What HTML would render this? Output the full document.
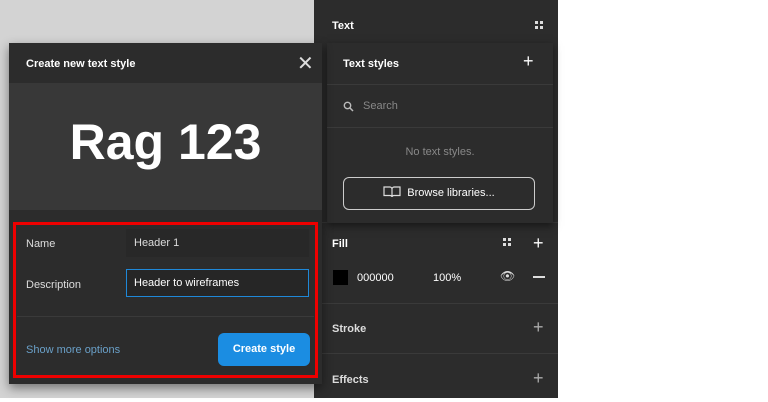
<!DOCTYPE html>
<html><head><style>
*{margin:0;padding:0;box-sizing:border-box}
body{width:768px;height:402px;background:#fff;position:relative;overflow:hidden;font-family:"Liberation Sans",sans-serif;color:#fff}
.a{position:absolute}
.t{font-size:11px;font-weight:bold}
.g{position:absolute;width:9px;height:9px}
.g i{position:absolute;width:3px;height:3px;background:#ddd}
</style></head><body>
<div class="a" style="left:0;top:0;width:316px;height:398px;background:#d3d3d3"></div>
<div class="a" style="left:314px;top:0;width:244px;height:398px;background:#2c2c2c"></div>
<div class="a t" style="left:332px;top:20px">Text</div>
<div class="g" style="left:535px;top:21px"><i style="left:0;top:0"></i><i style="left:5px;top:0"></i><i style="left:0;top:5px"></i><i style="left:5px;top:5px"></i></div>
<div class="a" style="left:314px;top:222px;width:244px;height:1px;background:#3a3a3a"></div>
<div class="a t" style="left:332px;top:238px">Fill</div>
<div class="g" style="left:503px;top:238px"><i style="left:0;top:0"></i><i style="left:5px;top:0"></i><i style="left:0;top:5px"></i><i style="left:5px;top:5px"></i></div>
<div class="a" style="left:533px;top:233px;font-size:18px;font-weight:300">+</div>
<div class="a" style="left:333px;top:270px;width:15px;height:15px;background:#000"></div>
<div class="a t" style="left:357px;top:272px;font-weight:normal">000000</div>
<div class="a t" style="left:433px;top:272px;font-weight:normal">100%</div>
<div class="a" style="left:500px;top:269px;font-size:12px;color:#ddd">👁</div>
<div class="a" style="left:533px;top:276px;width:12px;height:1.5px;background:#ddd"></div>
<div class="a" style="left:314px;top:303px;width:244px;height:1px;background:#3a3a3a"></div>
<div class="a t" style="left:332px;top:323px;color:#ddd">Stroke</div>
<div class="a" style="left:533px;top:317px;font-size:18px;font-weight:300;color:#aaa">+</div>
<div class="a" style="left:314px;top:353px;width:244px;height:1px;background:#3a3a3a"></div>
<div class="a t" style="left:332px;top:374px;color:#ddd">Effects</div>
<div class="a" style="left:533px;top:368px;font-size:18px;font-weight:300;color:#aaa">+</div>

<div class="a" style="left:327px;top:43px;width:226px;height:180px;background:#2c2c2c;box-shadow:0 3px 8px rgba(0,0,0,.5)">
 <div class="a t" style="left:16px;top:15px">Text styles</div>
 <div class="a" style="left:196px;top:8px;font-size:18px;font-weight:300">+</div>
 <div class="a" style="left:0;top:41px;width:226px;height:1px;background:#3a3a3a"></div>
 <svg class="a" style="left:16px;top:58px" width="11" height="11" viewBox="0 0 11 11"><circle cx="4.5" cy="4.5" r="3.2" fill="none" stroke="#bbb" stroke-width="1.4"/><path d="M7 7l3 3" stroke="#bbb" stroke-width="1.5"/></svg>
 <div class="a" style="left:36px;top:57px;font-size:11px;color:#888">Search</div>
 <div class="a" style="left:0;top:84px;width:226px;height:1px;background:#3a3a3a"></div>
 <div class="a" style="left:0;top:103px;width:226px;text-align:center;font-size:11px;color:#888">No text styles.</div>
 <div class="a" style="left:16px;top:134px;width:192px;height:33px;border:1.5px solid #ccc;border-radius:6px;text-align:center;line-height:30px;font-size:11px"><svg width="18" height="12" viewBox="0 0 18 12" style="vertical-align:-2px;margin-right:6px"><path d="M1 1h6c1 0 2 1 2 2v8c0-1-1-1.5-2-1.5H1zM17 1h-6c-1 0-2 1-2 2v8c0-1 1-1.5 2-1.5h6z" fill="none" stroke="#ddd" stroke-width="1.2"/></svg>Browse libraries...</div>
</div>

<div class="a" style="left:9px;top:43px;width:313px;height:341px;background:#2c2c2c;box-shadow:0 4px 10px rgba(0,0,0,.45)">
 <div class="a t" style="left:17px;top:15px">Create new text style</div>
 <div class="a" style="left:288px;top:8px;font-size:20px;color:#ddd">✕</div>
 <div class="a" style="left:0;top:40px;width:313px;height:127px;background:#383838"></div>
 <div class="a" style="left:0;top:70px;width:313px;text-align:center;font-size:50px;font-weight:bold;letter-spacing:0px">Rag 123</div>
 <div class="a" style="left:4px;top:179px;width:305px;height:156px;border:3px solid #e00"></div>
 <div class="a" style="left:17px;top:195px;font-size:11px;color:#ddd">Name</div>
 <div class="a" style="left:117px;top:186px;width:183px;height:28px;background:#282828;font-size:11px;padding:8px 8px;color:#ddd">Header 1</div>
 <div class="a" style="left:17px;top:236px;font-size:11px;color:#ddd">Description</div>
 <div class="a" style="left:117px;top:226px;width:183px;height:28px;background:#262626;border:1.5px solid #1f88d8;font-size:11px;padding:7px 7px">Header to wireframes</div>
 <div class="a" style="left:8px;top:273px;width:297px;height:1px;background:#3a3a3a"></div>
 <div class="a" style="left:17px;top:301px;font-size:11px;color:#6aa0c8">Show more options</div>
 <div class="a t" style="left:209px;top:290px;width:92px;height:33px;background:#1b8de2;border-radius:6px;text-align:center;line-height:33px">Create style</div>
</div>
</body></html>
